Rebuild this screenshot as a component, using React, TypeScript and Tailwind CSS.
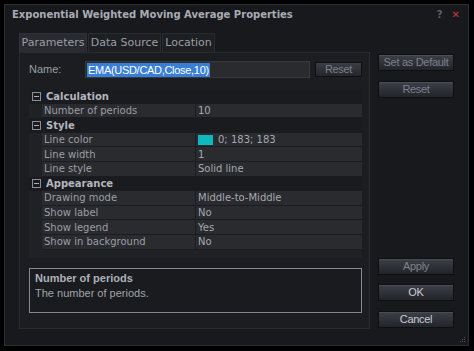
const rows: { kind: "cat" | "prop"; label: string; value?: string; swatch?: string }[] = [
  { kind: "cat", label: "Calculation" },
  { kind: "prop", label: "Number of periods", value: "10" },
  { kind: "cat", label: "Style" },
  { kind: "prop", label: "Line color", value: "0; 183; 183", swatch: "#0fb8c0" },
  { kind: "prop", label: "Line width", value: "1" },
  { kind: "prop", label: "Line style", value: "Solid line" },
  { kind: "cat", label: "Appearance" },
  { kind: "prop", label: "Drawing mode", value: "Middle-to-Middle" },
  { kind: "prop", label: "Show label", value: "No" },
  { kind: "prop", label: "Show legend", value: "Yes" },
  { kind: "prop", label: "Show in background", value: "No" },
];

function Btn({ label, bright, className = "" }: { label: string; bright?: boolean; className?: string }) {
  return (
    <div
      className={`flex h-[17px] w-[76px] items-center justify-center border border-[#0e0f11] bg-gradient-to-b from-[#3d4048] to-[#22242a] text-[11px] tracking-[-0.3px] shadow-[inset_0_1px_0_#4a4d55] ${
        bright ? "text-[#c9ccd2]" : "text-[#7d818a]"
      } ${className}`}
    >
      {label}
    </div>
  );
}

function Collapse() {
  return (
    <span className="flex h-[9px] w-[9px] items-center justify-center border border-[#8a8d95]">
      <span className="h-px w-[5px] bg-[#a8abb2]" />
    </span>
  );
}

export default function App() {
  return (
    <div
      className="h-[351px] w-[474px] bg-black pl-[4px] pt-[4px]"
      style={{ fontFamily: '"DejaVu Sans", sans-serif' }}
    >
      <div className="relative flex h-[342px] w-[465px] flex-col border border-[#2c2d31] bg-[#18191d]">
        {/* title bar */}
        <div className="flex h-[19px] items-center justify-between pl-[7px] pr-[8px]">
          <p className="text-[10px] font-bold text-[#a9acb3]">Exponential Weighted Moving Average Properties</p>
          <div className="flex items-center gap-[9px] text-[10px] font-bold">
            <span className="text-[#5d6068]">?</span>
            <span className="text-[#c8353b]">✕</span>
          </div>
        </div>

        <div className="flex flex-1 pl-[14px] pt-[9px]">
          {/* left: tabs + panel */}
          <div className="flex w-[351px] flex-col">
            <div className="flex h-[19px] items-end gap-px">
              <div className="flex h-[19px] w-[68px] items-center justify-center border border-b-0 border-[#303136] bg-[#2a2b30] text-[11px] text-[#9a9da4]">
                Parameters
              </div>
              <div className="flex h-[19px] w-[73px] items-center justify-center border border-b-0 border-[#2a2b2f] bg-[#1e1f23] text-[11px] text-[#9a9da4]">
                Data Source
              </div>
              <div className="flex h-[19px] w-[53px] items-center justify-center border border-b-0 border-[#2a2b2f] bg-[#1e1f23] text-[11px] text-[#9a9da4]">
                Location
              </div>
            </div>
            <div className="flex h-[277px] flex-col border border-[#2a2b30] bg-[#1c1d21] pl-[9px] pr-[7px] pt-[8px]">
              {/* name row */}
              <div className="flex h-[17px] items-center">
                <span
                  className="w-[56px] text-[11px] text-[#9a9da4]"
                  style={{ fontFamily: '"Liberation Sans", sans-serif' }}
                >
                  Name:
                </span>
                <div className="flex h-[17px] w-[225px] items-center border border-[#38393e] bg-[#2a2b2f] pl-[1px]">
                  <span
                    className="bg-[#3a7fd6] px-[1px] text-[11px] leading-[14px] tracking-[-0.3px] text-white"
                    style={{ fontFamily: '"Liberation Sans", sans-serif' }}
                  >
                    EMA(USD/CAD,Close,10)
                  </span>
                </div>
                <div className="ml-[5px]" style={{ fontFamily: '"Liberation Sans", sans-serif' }}>
                  <div className="flex h-[15px] w-[47px] items-center justify-center border border-[#0e0f11] bg-gradient-to-b from-[#3a3d45] to-[#24262c] text-[11px] tracking-[-0.3px] text-[#7d818a]">
                    Reset
                  </div>
                </div>
              </div>

              {/* property grid */}
              <div className="mt-[11px] flex h-[169px] flex-col bg-[#202125]">
                {rows.map((r) =>
                  r.kind === "cat" ? (
                    <div key={r.label} className="flex h-[14.6px] items-center gap-[5px] bg-[#1a1b1f] pl-[3px]">
                      <Collapse />
                      <span className="text-[10px] font-bold text-[#b3b6bd]">{r.label}</span>
                    </div>
                  ) : (
                    <div key={r.label} className="flex h-[14.6px] pl-[13px]">
                      <div className="flex w-[154px] items-center border-b border-r border-[#1b1c20] bg-[#2a2b2f] pl-[2px] text-[10px] text-[#9b9ea5]">
                        {r.label}
                      </div>
                      <div className="flex flex-1 items-center gap-[5px] border-b border-[#1b1c20] bg-[#2a2b2f] pl-[2px] text-[10px] text-[#a6a9b0]">
                        {r.swatch && <span className="h-[10px] w-[15px]" style={{ background: r.swatch }} />}
                        {r.value}
                      </div>
                    </div>
                  )
                )}
              </div>

              {/* description */}
              <div
                className="mt-[10px] flex h-[45px] flex-col border border-[#85888f] bg-[#1a1b1f] pl-[5px] pt-[2px]"
                style={{ fontFamily: '"Liberation Sans", sans-serif' }}
              >
                <p className="text-[11px] font-bold leading-[14px] text-[#aeb1b8]">Number of periods</p>
                <p className="mt-[1px] text-[11px] leading-[14px] text-[#a0a3aa]">The number of periods.</p>
              </div>
            </div>
          </div>

          {/* right: buttons */}
          <div
            className="ml-[8px] flex flex-col"
            style={{ fontFamily: '"Liberation Sans", sans-serif' }}
          >
            <Btn label="Set as Default" className="mt-[21px]" />
            <Btn label="Reset" className="mt-[10px]" />
            <Btn label="Apply" className="mt-[160px]" />
            <Btn label="OK" bright className="mt-[9px]" />
            <Btn label="Cancel" bright className="mt-[10px]" />
          </div>
        </div>

        {/* resize grip */}
        <div className="absolute bottom-[3px] right-[3px] grid grid-cols-3 gap-[1px]">
          {[0, 1, 2, 3, 4, 5, 6, 7, 8].map((i) => (
            <span key={i} className={`h-px w-px ${i === 0 || i === 1 || i === 3 ? "bg-transparent" : "bg-[#4a4c52]"}`} />
          ))}
        </div>
      </div>
    </div>
  );
}
